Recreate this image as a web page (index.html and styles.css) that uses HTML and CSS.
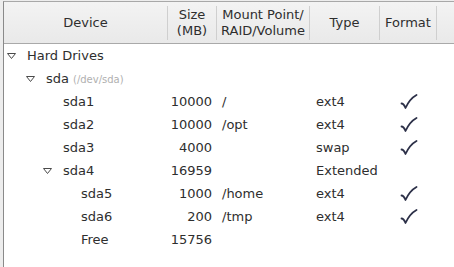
FILE: index.html
```html
<!DOCTYPE html>
<html lang="en">
<head>
    <meta charset="UTF-8">
    <title>Partitions</title>
    <link rel="stylesheet" href="styles.css">
</head>
<body>

<div class="tree-view">
    <div class="tree-header">
        <div class="col col-device">Device</div>
        <div class="col col-size">Size<br>(MB)</div>
        <div class="col col-mount">Mount Point/<br>RAID/Volume</div>
        <div class="col col-type">Type</div>
        <div class="col col-format">Format</div>
        <div class="col col-rest"></div>
    </div>

    <div class="row">
        <div class="cell device lvl0"><span class="expander"></span>Hard Drives</div>
    </div>
    <div class="row">
        <div class="cell device lvl1"><span class="expander"></span>sda <span class="dev-path">(/dev/sda)</span></div>
    </div>
    <div class="row">
        <div class="cell device lvl2">sda1</div>
        <div class="cell size">10000</div>
        <div class="cell mount">/</div>
        <div class="cell type">ext4</div>
        <div class="cell format"><span class="check"></span></div>
    </div>
    <div class="row">
        <div class="cell device lvl2">sda2</div>
        <div class="cell size">10000</div>
        <div class="cell mount">/opt</div>
        <div class="cell type">ext4</div>
        <div class="cell format"><span class="check"></span></div>
    </div>
    <div class="row">
        <div class="cell device lvl2">sda3</div>
        <div class="cell size">4000</div>
        <div class="cell mount"></div>
        <div class="cell type">swap</div>
        <div class="cell format"><span class="check"></span></div>
    </div>
    <div class="row">
        <div class="cell device lvl2x"><span class="expander"></span>sda4</div>
        <div class="cell size">16959</div>
        <div class="cell mount"></div>
        <div class="cell type">Extended</div>
        <div class="cell format"></div>
    </div>
    <div class="row">
        <div class="cell device lvl3">sda5</div>
        <div class="cell size">1000</div>
        <div class="cell mount">/home</div>
        <div class="cell type">ext4</div>
        <div class="cell format"><span class="check"></span></div>
    </div>
    <div class="row">
        <div class="cell device lvl3">sda6</div>
        <div class="cell size">200</div>
        <div class="cell mount">/tmp</div>
        <div class="cell type">ext4</div>
        <div class="cell format"><span class="check"></span></div>
    </div>
    <div class="row">
        <div class="cell device lvl3">Free</div>
        <div class="cell size">15756</div>
        <div class="cell mount"></div>
        <div class="cell type"></div>
        <div class="cell format"></div>
    </div>
</div>

<script>
    // expander triangles
    document.querySelectorAll('.expander').forEach(function(el) {
        el.innerHTML = '<svg width="9" height="6" viewBox="0 0 9 6">' +
            '<path d="M0.5 0.5 H8.5 L4.5 5.5 Z" fill="none" stroke="#4a4a4a" stroke-width="1" stroke-linejoin="round"/>' +
            '</svg>';
    });
    // check marks in the Format column
    document.querySelectorAll('.check').forEach(function(el) {
        el.innerHTML = '<svg width="18" height="16" viewBox="0 0 18 16">' +
            '<path d="M1.5 9.5 C3 9.5 4.5 11.5 5.5 14 C8 8.5 12 3.5 16.5 1" fill="none" stroke="#2c3048" stroke-width="1.8" stroke-linecap="round" stroke-linejoin="round"/>' +
            '</svg>';
    });
</script>
</body>
</html>
```

FILE: styles.css
```css
body {
    margin: 0;
    background-color: #ededed;
    font-family: 'DejaVu Sans', sans-serif;
    font-size: 13px;
    color: #2e2e2e;
    height: 267px;
    overflow: hidden;
}
.tree-view {
    margin: 1px 0 0 3px;
    background-color: #fff;
    border-left: 1px solid #8a8a8a;
    border-top: 1px solid #a8a8a8;
    height: 266px;
}
.tree-header {
    display: flex;
    height: 41px;
    border-bottom: 1px solid #a9a9a9;
    background: linear-gradient(#f3f3f3, #e9e9e9);
}
.tree-header .col {
    display: flex;
    align-items: center;
    justify-content: center;
    text-align: center;
    line-height: 16px;
    border-right: 1px solid #cfcfcf;
    margin: 4px 0 3px;
}
.col-device { width: 163px; }
.col-size { width: 48px; }
.col-mount { width: 92px; }
.col-type { width: 69px; }
.col-format { width: 56px; }
.tree-header .col-rest {
    flex: 1;
    border-right: none;
}
.row {
    display: flex;
    height: 23px;
    align-items: center;
}
.cell {
    white-space: nowrap;
}
.device {
    width: 164px;
    display: flex;
    align-items: center;
    box-sizing: border-box;
}
.lvl0 { padding-left: 3px; }
.lvl1 { padding-left: 22px; }
.lvl2 { padding-left: 59px; }
.lvl2x { padding-left: 39px; }
.lvl3 { padding-left: 77px; }
.expander {
    display: inline-flex;
    width: 20px;
}
.expander svg {
    display: block;
}
.dev-path {
    font-size: 10px;
    color: #b0b0b0;
    margin-left: 4px;
    padding-top: 2px;
}
.size {
    width: 44px;
    text-align: right;
}
.mount {
    width: 94px;
    padding-left: 10px;
}
.type {
    width: 84px;
}
.format {
    display: flex;
    align-items: center;
}
.check svg {
    display: block;
}
```
